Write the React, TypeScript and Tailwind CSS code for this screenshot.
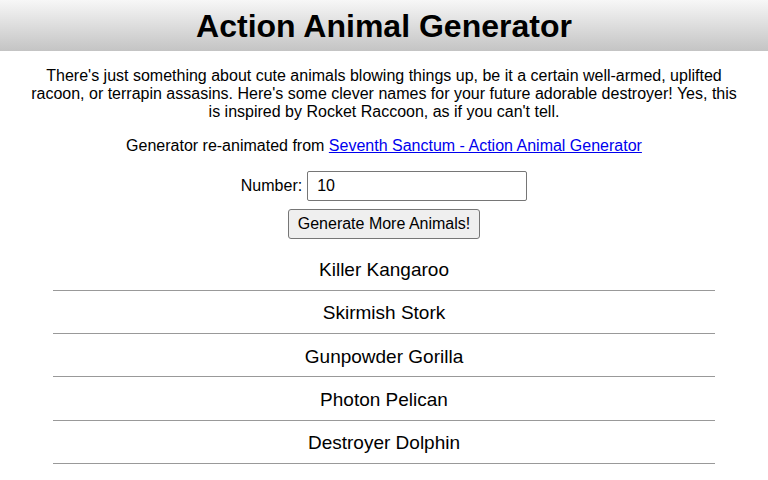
import React, { useState } from 'react';

const animals = [
  'Killer Kangaroo',
  'Skirmish Stork',
  'Gunpowder Gorilla',
  'Photon Pelican',
  'Destroyer Dolphin',
  'Hardcore Hyena',
  'Mortar Mongoose',
  'Ballistic Badger',
  'Raider Rabbit',
  'Artillery Alligator',
];

const App: React.FC = () => {
  const [count, setCount] = useState('10');

  return (
    <div className="min-h-screen bg-white text-black font-['Liberation_Sans',Arial,sans-serif]">
      <header className="h-[51px] flex items-center justify-center bg-gradient-to-b from-[#f7f7f7] to-[#c4c4c4]">
        <h1 className="text-[32px] font-bold">Action Animal Generator</h1>
      </header>

      <main className="max-w-[720px] mx-auto text-center">
        <p className="mt-[16px] text-[16px] leading-[18px]">
          There's just something about cute animals blowing things up, be it a certain well-armed, uplifted racoon, or terrapin assasins. Here's some clever names for your future adorable destroyer! Yes, this is inspired by Rocket Raccoon, as if you can't tell.
        </p>
        <p className="mt-[16px] text-[16px] leading-[18px]">
          Generator re-animated from{' '}
          <a href="#" className="text-[#0000ee] underline">
            Seventh Sanctum - Action Animal Generator
          </a>
        </p>

        <div className="mt-[16px] flex items-center justify-center gap-[5px] text-[16px]">
          <label htmlFor="num">Number:</label>
          <input
            id="num"
            value={count}
            onChange={(e) => setCount(e.target.value)}
            className="w-[220px] h-[30px] px-[9px] border border-[#767676] rounded-[2px] text-[16px]"
          />
        </div>
        <div className="mt-[8px] flex justify-center">
          <button className="h-[30px] px-[9px] bg-[#efefef] border border-[#767676] rounded-[3px] text-[16px]">
            Generate More Animals!
          </button>
        </div>
      </main>

      <ul className="w-[662px] mx-auto mt-[8.5px]">
        {animals.map((name) => (
          <li
            key={name}
            className="h-[43.33px] pt-[3px] flex items-center justify-center border-b border-[#999] text-[19px]"
          >
            {name}
          </li>
        ))}
      </ul>
    </div>
  );
};

export default App;
